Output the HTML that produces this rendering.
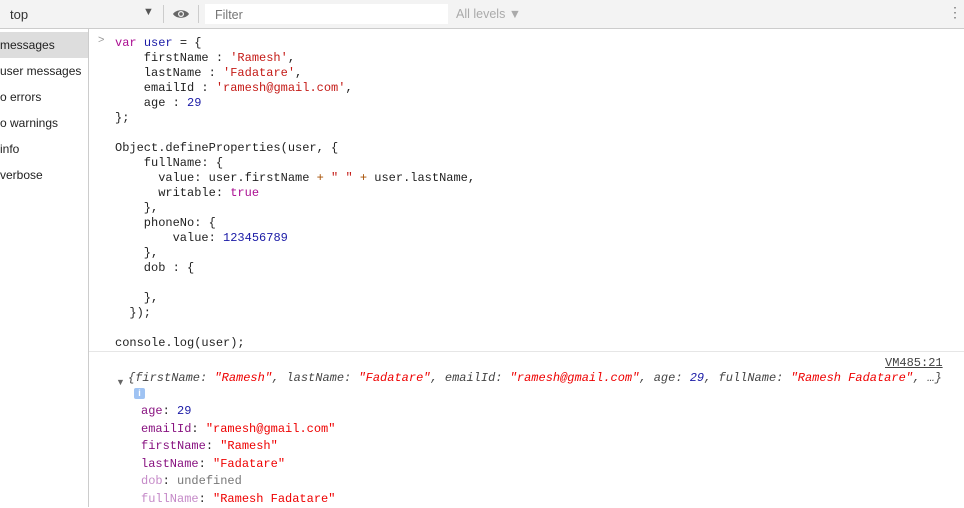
<!DOCTYPE html>
<html><head><style>
body{margin:0;width:964px;height:507px;overflow:hidden;background:#fff;font-family:"Liberation Sans",sans-serif;position:relative}
.top{position:absolute;left:0;top:0;width:964px;height:28px;background:#f3f3f3;border-bottom:1px solid #ccc}
.side{position:absolute;left:0;top:29px;width:88px;height:478px;border-right:1px solid #ccc;font-size:12px;color:#222}
.side div{height:26px;line-height:26px;padding-left:0;white-space:nowrap}
.code{position:absolute;left:115px;top:36px;font-family:"Liberation Mono",monospace;font-size:12px;line-height:15px;white-space:pre;color:#222}
.k{color:#aa0d91}.v{color:#1a1aa6}.s{color:#c41a16}.o{color:#a64e00}.pr{color:#881280}
.s2{color:#e00}
.props{position:absolute;left:141px;top:403px;font-family:"Liberation Mono",monospace;font-size:12px;line-height:17.5px;white-space:pre;color:#222}
</style></head><body>
<div class="top">
 <span style="position:absolute;left:10px;top:7px;font-size:13px;color:#333">top</span>
 <span style="position:absolute;left:143px;top:6px;font-size:11px;color:#555">▼</span>
 <div style="position:absolute;left:163px;top:5px;width:1px;height:18px;background:#ccc"></div>
 <svg style="position:absolute;left:172px;top:7px" width="18" height="14" viewBox="0 0 18 14"><path d="M1 7C4 2 14 2 17 7C14 12 4 12 1 7Z" fill="#666"/><circle cx="9" cy="7" r="3" fill="#f3f3f3"/><circle cx="9" cy="7" r="1.8" fill="#666"/></svg>
 <div style="position:absolute;left:198px;top:5px;width:1px;height:18px;background:#ccc"></div>
 <div style="position:absolute;left:205px;top:4px;width:243px;height:20px;background:#fff"></div>
 <span style="position:absolute;left:215px;top:8px;font-size:12.5px;color:#757575">Filter</span>
 <span style="position:absolute;left:456px;top:7px;font-size:12.5px;color:#aaa">All levels ▼</span>
 <span style="position:absolute;left:948px;top:4px;font-size:14px;color:#777">⋮</span>
</div>
<div class="side">
 <div style="background:#ddd;margin-top:3px">messages</div>
 <div>user messages</div>
 <div>o errors</div>
 <div>o warnings</div>
 <div>info</div>
 <div>verbose</div>
</div>
<span style="position:absolute;left:98px;top:34px;font-size:11px;color:#999">&gt;</span>
<div class="code"><span class="k">var</span> <span class="v">user</span> = {
    firstName : <span class="s">'Ramesh'</span>,
    lastName : <span class="s">'Fadatare'</span>,
    emailId : <span class="s">'ramesh@gmail.com'</span>,
    age : <span class="v">29</span>
};

Object.defineProperties(user, {
    fullName: {
      value: user.firstName <span class="o">+</span> <span class="s">" "</span> <span class="o">+</span> user.lastName,
      writable: <span class="k">true</span>
    },
    phoneNo: {
        value: <span class="v">123456789</span>
    },
    dob : {

    },
  });

console.log(user);</div>
<div style="position:absolute;left:89px;top:351px;width:875px;height:1px;background:#e6e6e6"></div>
<span style="position:absolute;left:885px;top:356px;font-family:'Liberation Mono',monospace;font-size:12px;color:#444;text-decoration:underline">VM485:21</span>
<span style="position:absolute;left:116px;top:377px;font-size:9px;color:#666">▼</span>
<div style="position:absolute;left:128px;top:371px;font-family:'Liberation Mono',monospace;font-size:12px;font-style:italic;white-space:pre;color:#444">{firstName: <span class="s2">"Ramesh"</span>, lastName: <span class="s2">"Fadatare"</span>, emailId: <span class="s2">"ramesh@gmail.com"</span>, age: <span class="v">29</span>, fullName: <span class="s2">"Ramesh Fadatare"</span>, …}</div>
<div style="position:absolute;left:134px;top:388px;width:11px;height:11px;background:#9fc3f3;border-radius:2px;color:#fff;font-size:9px;line-height:11px;text-align:center;font-weight:bold">i</div>
<div class="props"><span class="pr">age</span>: <span class="v">29</span>
<span class="pr">emailId</span>: <span class="s2">"ramesh@gmail.com"</span>
<span class="pr">firstName</span>: <span class="s2">"Ramesh"</span>
<span class="pr">lastName</span>: <span class="s2">"Fadatare"</span>
<span style="color:#c58ac8">dob</span>: <span style="color:#777">undefined</span>
<span style="color:#c58ac8">fullName</span>: <span class="s2">"Ramesh Fadatare"</span></div>
</body></html>
